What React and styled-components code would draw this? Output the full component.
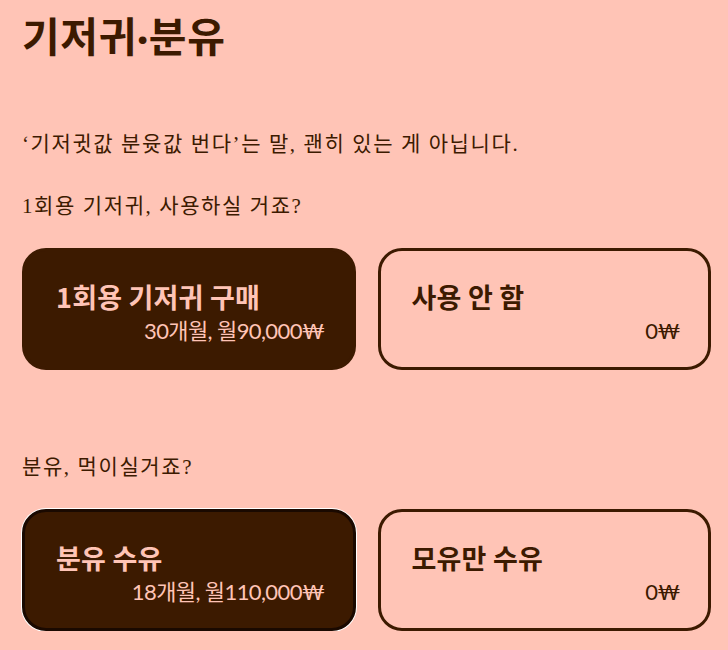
import React, { useState } from 'react';
import styled, { createGlobalStyle } from 'styled-components';

const GlobalStyle = createGlobalStyle`
    body {
        margin: 0;
        background-color: #ffc4b6;
    }
`;

const Page = styled.div`
    padding: 8px 17px 0 22px;
    color: #3c1a00;
`;

const Title = styled.h1`
    margin: 0;
    font-family: Lato, "Noto Sans CJK KR", sans-serif;
    font-weight: 700;
    font-size: 41px;
    line-height: 58px;
    letter-spacing: 0.6px;
`;

const Text = styled.p`
    margin: ${props => props.margin ? props.margin : '0'};
    font-family: "Liberation Serif", "Noto Sans CJK KR", serif;
    font-size: 21px;
    line-height: 30px;
    letter-spacing: 1.6px;
`;

const Choices = styled.div`
    display: grid;
    grid-template-columns: 1fr 1fr;
    gap: 22px;
    margin-top: 27px;
`;

const Choice = styled.button`
    display: flex;
    flex-direction: column;
    height: 122px;
    padding: 26px 28px 0 31px;
    border: 3px solid ${props => props.focused ? '#1a0900' : '#3c1a00'};
    border-radius: 24px;
    background-color: ${props => props.selected ? '#3c1a00' : 'transparent'};
    color: ${props => props.selected ? '#ffc4b6' : '#3c1a00'};
    box-shadow: ${props => props.focused ? '0 0 0 1px #ffffff' : 'none'};
    text-align: left;
    cursor: pointer;
`;

const ChoiceName = styled.span`
    font-family: "Noto Sans CJK KR", sans-serif;
    font-weight: 700;
    font-size: 27px;
    line-height: 40px;
    letter-spacing: 0.2px;
`;

const ChoicePrice = styled.span`
    align-self: flex-end;
    font-family: Lato, "Noto Sans CJK KR", sans-serif;
    font-size: 22px;
    line-height: 28px;
    letter-spacing: -0.6px;
`;

function Question({ label, margin, options, picked, onPick, focused }) {
    return (
        <>
            <Text margin={margin}>{label}</Text>
            <Choices>
                {options.map((opt, i) => (
                    <Choice
                        key={opt.name}
                        selected={picked === i}
                        focused={focused && picked === i}
                        onClick={() => onPick(i)}
                    >
                        <ChoiceName>{opt.name}</ChoiceName>
                        <ChoicePrice>{opt.price}</ChoicePrice>
                    </Choice>
                ))}
            </Choices>
        </>
    );
}

export default function App() {
    const [diaper, setDiaper] = useState(0);
    const [formula, setFormula] = useState(0);

    return (
        <Page>
            <GlobalStyle />
            <Title>기저귀·분유</Title>
            <Text margin="63px 0 0">‘기저귓값 분윳값 번다’는 말, 괜히 있는 게 아닙니다.</Text>
            <Question
                label="1회용 기저귀, 사용하실 거죠?"
                margin="32px 0 0"
                options={[
                    { name: '1회용 기저귀 구매', price: '30개월, 월90,000₩' },
                    { name: '사용 안 함', price: '0₩' },
                ]}
                picked={diaper}
                onPick={setDiaper}
            />
            <Question
                label="분유, 먹이실거죠?"
                margin="82px 0 0"
                options={[
                    { name: '분유 수유', price: '18개월, 월110,000₩' },
                    { name: '모유만 수유', price: '0₩' },
                ]}
                picked={formula}
                onPick={setFormula}
                focused
            />
        </Page>
    );
}
